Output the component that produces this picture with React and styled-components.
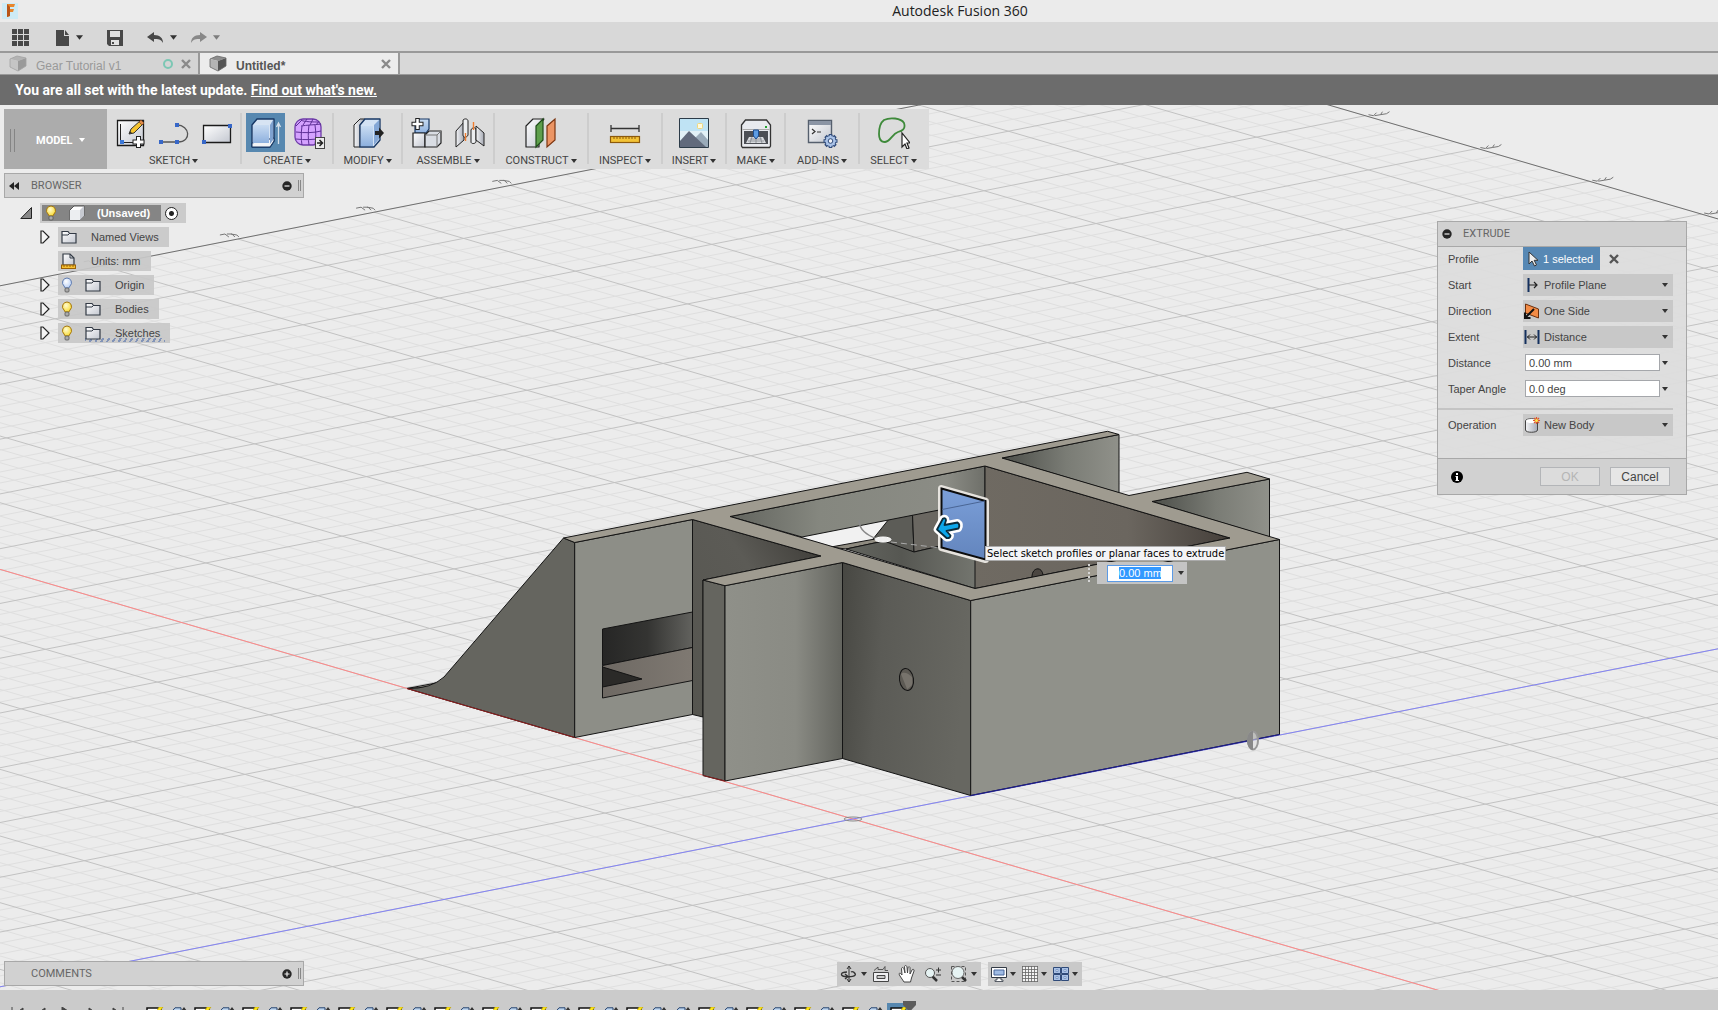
import React from 'react';
import styled, { createGlobalStyle, css } from 'styled-components';

const GlobalStyle = createGlobalStyle`
    * {
        box-sizing: border-box;
    }

    body {
        margin: 0;
        overflow: hidden;
        background: #ececec;
        color: #444;
        font-family: Roboto, 'Liberation Sans', sans-serif;
        font-size: 12px;
    }

    button, input, select {
        font: inherit;
        color: inherit;
    }

    button {
        padding: 0;
        border: 0;
        background: none;
    }

    svg {
        display: block;
        flex: none;
    }
`;

/* ---------- small shared glyphs ---------- */

const Caret = ({ color = '#333', size = 6 }) => (
    <svg width={size} height={size - 2} viewBox="0 0 6 4">
        <path d="M0 0h6L3 4z" fill={color} />
    </svg>
);

const Cross = ({ color = '#8a8a8a', size = 10 }) => (
    <svg width={size} height={size} viewBox="0 0 10 10">
        <path d="M1 1l8 8M9 1L1 9" stroke={color} strokeWidth="2.4" />
    </svg>
);

const RoundSign = ({ plus }) => (
    <svg width="10" height="10" viewBox="0 0 10 10">
        <circle cx="5" cy="5" r="4.7" fill="#262626" />
        <path d={plus ? 'M2.5 5h5M5 2.5v5' : 'M2.5 5h5'} stroke="#eee" strokeWidth="1.2" />
    </svg>
);

const DocCube = ({ faded }) => (
    <svg width="18" height="18" viewBox="0 0 18 18" opacity={faded ? 0.45 : 1}>
        <path d="M1 4L8 1l9 2-8 3z" fill="#8d8d8d" />
        <path d="M1 4l8 2v10l-8-4z" fill="#b4b4b4" />
        <path d="M9 6l8-3v8l-8 5z" fill="#555" />
        <path d="M1 4L8 1l9 2v8l-8 5-8-4z" fill="none" stroke="#666" strokeWidth=".8" />
    </svg>
);

/* ---------- ribbon icons ---------- */

const Gradients = () => (
    <svg width="0" height="0" style={{ position: 'absolute' }} aria-hidden="true">
        <defs>
            <linearGradient id="paper" x1="0" y1="0" x2="1" y2="1">
                <stop offset="0" stopColor="#fff" />
                <stop offset="1" stopColor="#c3c7d0" />
            </linearGradient>
            <linearGradient id="blue" x1="0" y1="0" x2="0" y2="1">
                <stop offset="0" stopColor="#c9dcf2" />
                <stop offset="1" stopColor="#8db0de" />
            </linearGradient>
            <linearGradient id="steel" x1="0" y1="0" x2="1" y2="0">
                <stop offset="0" stopColor="#f4f5f7" />
                <stop offset="1" stopColor="#a6aab4" />
            </linearGradient>
            <radialGradient id="bulbOn" cx=".4" cy=".35" r=".7">
                <stop offset="0" stopColor="#fffbd0" />
                <stop offset="1" stopColor="#f8d92c" />
            </radialGradient>
            <radialGradient id="bulbOff" cx=".4" cy=".35" r=".7">
                <stop offset="0" stopColor="#fff" />
                <stop offset="1" stopColor="#b5cdf5" />
            </radialGradient>
        </defs>
    </svg>
);

const Icon32 = ({ children }) => (
    <svg width="32" height="32" viewBox="0 0 32 32">{children}</svg>
);

const SketchIcon = () => (
    <Icon32>
        <path d="M2.5 3.5h26v25h-26z" fill="url(#paper)" stroke="#1b1b1b" strokeWidth="1.3" />
        <path d="M5.5 7v17.500M7 25.500h15" stroke="#222" fill="none" />
        <rect x="5" y="23" width="4" height="4" fill="#3b78d8" />
        <path d="M14 17l2-5 10-9 3 3-10 10z" fill="#f5c431" stroke="#333" />
        <path d="M24 5l2-2 3 3-2 2z" fill="#e08b4a" stroke="#7a3e18" strokeWidth=".7" />
        <path d="M14 17l1-3 2 2z" fill="#333" />
        <path d="M23.500 19v12M17.500 25h12" stroke="#222" strokeWidth="5" />
        <path d="M23.500 20v10M18.500 25h10" stroke="#fff" strokeWidth="3" />
    </Icon32>
);

const LineIcon = () => (
    <Icon32>
        <path d="M3 25h17c14 0 12-17-1-17" fill="none" stroke="#555" strokeWidth="1.300" />
        {[[1, 23], [17, 23], [17, 6]].map(([x, y]) => (
            <rect key={x + '-' + y} x={x} y={y} width="4" height="4" fill="#3767c8" />
        ))}
    </Icon32>
);

const RectIcon = () => (
    <Icon32>
        <path d="M2.500 8.500h27v17h-27z" fill="url(#paper)" stroke="#1b1b1b" strokeWidth="1.300" />
        <rect x="27" y="7" width="4" height="4" fill="#3767c8" />
        <rect x="1" y="23" width="4" height="4" fill="#3767c8" />
    </Icon32>
);

const ExtrudeIcon = () => (
    <Icon32>
        <path d="M2 8l5-6h17v22l-4 6H2z" fill="#d7e4f3" stroke="#173764" strokeWidth="1.400" strokeLinejoin="round" />
        <path d="M2 26v4h18l4-6v-3z" fill="#f3f4f6" stroke="#173764" />
        <path d="M3 8h16v18H3z" fill="url(#blue)" />
        <path d="M20 8l3-5v20l-3 4z" fill="#7fa2d0" />
        <path d="M28.500 27V7M26.500 10l2-4 2 4" stroke="#d6e0ea" fill="none" strokeWidth="1.300" />
    </Icon32>
);

const FormIcon = () => (
    <Icon32>
        <rect x="2" y="2" width="26" height="26" rx="8" fill="#d5a2ff" stroke="#6d3ba8" strokeWidth="1.300" />
        <path d="M8 3c2 2 14 2 18 2M8 9c6-1 12-1 20-2M3 15c8 1 18 1 25-1M3 22c8 1 18 1 25-1M9 9c-1 7-1 13 0 19M16 8c-1 7-1 14 0 20M22 8c1 7 1 13 0 19M3 9l6-6M10 8l4-6M17 8l3-6M23 8l3-4" stroke="#5d2f96" fill="none" />
        <rect x="22.500" y="20.500" width="9" height="11" fill="#ececec" stroke="#444" />
        <path d="M24 26h5M26.500 23l3 3-3 3" stroke="#222" strokeWidth="1.500" fill="none" />
    </Icon32>
);

const ModifyIcon = () => (
    <Icon32>
        <path d="M2 8l6-6h5L8 8v22H2z" fill="url(#steel)" stroke="#222" strokeLinejoin="round" />
        <path d="M8 8l5-6h15v21l-6 7H8z" fill="#d3e2f4" stroke="#173764" strokeWidth="1.300" strokeLinejoin="round" />
        <path d="M9 9h12v20H9z" fill="url(#blue)" />
        <path d="M22 8l5-5v19l-5 6z" fill="#84a7d6" />
        <path d="M23 14h4v-3.500l5 5.500-5 5.500V18h-4z" fill="#222" />
    </Icon32>
);

const ComponentIcon = () => (
    <Icon32>
        <path d="M4 6l4-4h10v10l-3 4H4z" fill="url(#blue)" stroke="#173764" strokeWidth="1.200" />
        <path d="M2 16h12v14H2z" fill="url(#paper)" stroke="#222" strokeWidth="1.200" />
        <path d="M14 18l4-4h12v12l-4 4H14z" fill="#d9dde3" stroke="#222" strokeWidth="1.200" />
        <path d="M14 18h12v12M26 18l4-4" stroke="#777" fill="none" />
        <path d="M6.500 1v12M.5 7h12" stroke="#222" strokeWidth="4.500" />
        <path d="M6.500 2v10M1.500 7h10" stroke="#fff" strokeWidth="2.500" />
    </Icon32>
);

const JointIcon = () => (
    <Icon32>
        <path d="M2 14l8-9v18l-8 7z" fill="url(#steel)" stroke="#222" />
        <path d="M9 3c2-2 5-1 5 1v14c-1 3-5 3-5 0z" fill="#eceef0" stroke="#222" />
        <path d="M17 13c1-3 5-3 5 0v12c-1 2-5 2-5 0z" fill="#eceef0" stroke="#222" />
        <path d="M22 9l8 7v13l-8-6z" fill="url(#steel)" stroke="#222" />
        <path d="M11.500 16v8M19.500 5v8" stroke="#ee7c30" strokeWidth="1.400" />
    </Icon32>
);

const PlaneIcon = () => (
    <Icon32>
        <path d="M1 9l7-7h11l-5 7v21H1z" fill="url(#paper)" stroke="#222" strokeWidth="1.200" strokeLinejoin="round" />
        <path d="M11 9l7-7v21l-7 7z" fill="#5e9f4c" stroke="#1e4d18" strokeWidth="1.200" />
        <path d="M22 9l8-7v21l-8 7z" fill="#ec9564" stroke="#7c3510" strokeWidth="1.200" />
    </Icon32>
);

const MeasureIcon = () => (
    <Icon32>
        <path d="M2 11.500h28M2 8v7M30 8v7" stroke="#333" strokeWidth="1.300" />
        <rect x="1.500" y="19.500" width="29" height="6" fill="#f3c336" stroke="#8d5a0c" strokeWidth="1.200" />
        <path d="M5 20v2M8 20v2M11 20v2M14 20v2M17 20v2M20 20v2M23 20v2M26 20v2" stroke="#8d5a0c" />
    </Icon32>
);

const ImageIcon = () => (
    <Icon32>
        <path d="M1.500 1.500h29v29h-29z" fill="#bfe3f4" stroke="#2c3b48" />
        <path d="M2 14h28v16H2z" fill="#e2f1f7" />
        <rect x="19.500" y="6.500" width="5" height="5" rx="1" fill="#fffbe0" stroke="#f1d77c" />
        <path d="M14 24l9-9 7 8v7H16z" fill="#9aabba" />
        <path d="M2 24l9-10 17 16H2z" fill="#616a7c" />
    </Icon32>
);

const PrinterIcon = () => (
    <Icon32>
        <path d="M1.500 8l4-5h21l4 5v21l-1 1.500h-27l-1-1.500z" fill="#e8eaee" stroke="#333" strokeWidth="1.300" />
        <path d="M2.500 12.500h27" stroke="#aaa" />
        <path d="M4 14h24v13H4z" fill="#4c4f55" />
        <path d="M6 26l3-6h14l3 6z" fill="#d7dade" />
        <path d="M8 24h16M10 22h12M12 20l-2 6M20 20l2 6M16 20v6" stroke="#84888e" strokeWidth=".8" />
        <path d="M13.500 13h5v6l-2.500 3-2.500-3z" fill="#5d9de4" stroke="#1d4f92" />
        <rect x="25" y="9" width="2" height="2" fill="#22a32e" />
    </Icon32>
);

const ScriptIcon = () => (
    <Icon32>
        <path d="M2.500 3.500h23v22h-23z" fill="url(#paper)" stroke="#555f6d" strokeWidth="1.400" />
        <path d="M3 4h22v4H3z" fill="#8b95a5" />
        <path d="M6 12l3 2.500L6 17M11 15h4" fill="none" stroke="#333" strokeWidth="1.200" />
        <g stroke="#2f4a79" strokeWidth="3.500">
            <path d="M24.500 17v14M17.500 24h14M19.500 19l10 10M29.500 19l-10 10" />
        </g>
        <circle cx="24.500" cy="24" r="5.500" fill="#aac3e8" stroke="#2f4a79" />
        <path d="M24.500 18v12M18.500 24h12M20.500 20l8 8M28.500 20l-8 8" stroke="#aac3e8" strokeWidth="1.600" />
        <circle cx="24.500" cy="24" r="2.300" fill="#f0f3f8" stroke="#2f4a79" />
    </Icon32>
);

const SelectIcon = () => (
    <Icon32>
        <path d="M6 3c6-3 17-2 20 3 2 6-2 8-6 9-6 2-7 9-13 10-5 0-6-4-6-8 0-5 1-11 5-14z" fill="none" stroke="#3e8a3a" strokeWidth="1.800" />
        <path d="M24 16v14l3-3 2 5 2-1-2-5h3z" fill="#fff" stroke="#222" strokeWidth="1.200" />
    </Icon32>
);

/* ---------- browser tree icons ---------- */

const Bulb = ({ off }) => (
    <svg width="12" height="16" viewBox="0 0 12 16">
        <path d="M6 1a4.600 4.600 0 00-3 8l1.200 2h3.600L9 9a4.600 4.600 0 00-3-8z" fill={off ? 'url(#bulbOff)' : 'url(#bulbOn)'} stroke={off ? '#5f7cb0' : '#a5760c'} />
        <rect x="4" y="11" width="4" height="4" rx="1" fill="#aaa" stroke="#555" strokeWidth=".8" />
    </svg>
);

const Folder = () => (
    <svg width="16" height="14" viewBox="0 0 16 14">
        <path d="M1 1.500h6l1.500 2H15v9.500H1z" fill="url(#paper)" stroke="#333a45" strokeWidth="1.200" />
        <path d="M1 5h6l1.500-1.500" fill="none" stroke="#333a45" />
    </svg>
);

const UnitsDoc = () => (
    <svg width="16" height="16" viewBox="0 0 16 16">
        <path d="M2 12V1h7l4 4v7z" fill="url(#paper)" stroke="#333a45" strokeWidth="1.200" />
        <path d="M9 1v4h4" fill="none" stroke="#333a45" />
        <rect x=".5" y="12" width="14" height="3.500" fill="#f7c233" stroke="#9b6206" />
        <path d="M3 12v2M6 12v2M9 12v2M12 12v2" stroke="#9b6206" />
    </svg>
);

const BodyCube = () => (
    <svg width="16" height="16" viewBox="0 0 16 16">
        <path d="M1 5l4-4h10v10l-4 4H1z" fill="#fff" stroke="#555" strokeLinejoin="round" />
        <path d="M11 5l4-4v10l-4 4z" fill="#c7cad1" />
        <path d="M1 5h10v10H1z" fill="#eceef1" />
    </svg>
);

const Twisty = ({ open }) => (
    <svg width="12" height="14" viewBox="0 0 12 14">
        {open
            ? <path d="M11.500 1.500v11H.8z" fill="#888" stroke="#222" />
            : <path d="M1 1h2l6 6-6 6H1z" fill="#f4f4f4" stroke="#222" strokeWidth="1.200" />}
    </svg>
);

/* ---------- window chrome ---------- */

const TitleBar = styled.header`
    display: flex;
    align-items: center;
    height: 22px;
    padding-left: 2px;
    background: #ebebeb;

    h1 {
        flex: 1;
        margin: 0;
        padding-left: 184px;
        text-align: center;
        font: 14px/22px 'Open Sans', sans-serif;
        color: #222;
    }
`;

const QuickBar = styled.nav`
    display: flex;
    align-items: center;
    gap: 24px;
    height: 31px;
    padding: 2px 12px 0;
    background: #d8d8d8;
    border-bottom: 2px solid #999;
`;

const UndoRedo = styled.div`
    display: flex;
    gap: 13px;
`;

const QuickButton = styled.button`
    display: flex;
    align-items: center;
    gap: 6px;
    height: 20px;
    opacity: ${(p) => (p.disabled ? 0.55 : 1)};
`;

const TabBar = styled.div`
    display: flex;
    height: 22px;
    background: #d8d8d8;
    border-bottom: 1px solid #999;
`;

const Tab = styled.div`
    display: flex;
    align-items: center;
    width: 200px;
    padding: 0 7px 0 9px;
    border-right: 2px solid #999;
    background: ${(p) => (p.$active ? '#ececec' : '#d4d4d4')};

    button:first-child {
        display: flex;
        align-items: center;
        flex: 1;
        gap: 9px;
        font: ${(p) => (p.$active ? 'bold' : 'normal')} 12px/18px 'Liberation Sans', sans-serif;
        color: ${(p) => (p.$active ? '#555' : '#999')};
    }

    button:first-child span {
        padding-top: 4px;
    }
`;

const SyncDot = styled.span`
    width: 10px;
    height: 10px;
    margin-right: 8px;
    border: 2px solid #7cc7b4;
    border-radius: 50%;
`;

const Banner = styled.p`
    height: 30px;
    margin: 0;
    padding-left: 15px;
    background: #6c6c6c;
    color: #fff;
    font: bold 14px/31px Roboto, 'Liberation Sans', sans-serif;

    a {
        color: #fff;
    }
`;

/* ---------- canvas ---------- */

const Page = styled.div`
    display: flex;
    flex-direction: column;
    height: 100vh;
`;

const Viewport = styled.main`
    position: relative;
    display: flex;
    flex-direction: column;
    align-items: flex-start;
    flex: 1;
    min-height: 0;
    padding: 4px;
    overflow: hidden;
`;

const Scene = styled.svg`
    position: absolute;
    inset: 0;
    width: 100%;
    height: 100%;
`;

const Ribbon = styled.div`
    position: relative;
    display: flex;
    height: 60px;
    margin-bottom: 4px;
    background: #dcdcdc;
`;

const ModelButton = styled.button`
    display: flex;
    align-items: center;
    gap: 6px;
    width: 103px;
    padding: 2px 0 0 6px;
    background: #acacac;
    color: #fff;
    font-size: 11px;
    font-weight: bold;

    span {
        width: 5px;
        height: 23px;
        margin-right: 15px;
        border: solid #858585;
        border-width: 0 1px;
    }
`;

const RibbonGroup = styled.section`
    display: flex;
    flex-direction: column;
    align-items: center;
    width: ${(p) => p.$width}px;
    padding: 4px 2px 0 0;
    background: ${(p) => (p.$last ? 'none' : 'linear-gradient(#cdcdcd, #cdcdcd) no-repeat right 4px / 2px 51px')};
`;

const ToolRow = styled.div`
    display: flex;
    gap: 4px;
`;

const ToolButton = styled.button`
    display: grid;
    place-items: center;
    width: 39px;
    height: 39px;
    background: ${(p) => (p.$active ? '#5788b0' : 'none')};
`;

const GroupLabel = styled.button`
    display: flex;
    align-items: center;
    gap: 2px;
    height: 18px;
    font-size: 11px;
    line-height: 18px;
`;

const panelHeader = css`
    display: flex;
    align-items: center;
    height: 25px;
    background: #d1d1d1;
    border: 1px solid #a8a8a8;

    h2 {
        margin: 0;
        font-size: 11px;
        font-weight: normal;
        color: #666;
    }
`;

const SidePanelBar = styled.div`
    ${panelHeader}
    position: relative;
    width: 300px;
    padding: 0 2px 0 4px;

    h2 {
        flex: 1;
        padding-left: ${(p) => (p.$plain ? 22 : 12)}px;
    }
`;

const Grip = styled.span`
    width: 3px;
    height: 11px;
    margin-left: 6px;
    border: solid #888;
    border-width: 0 1px;
`;

const Tree = styled.ul`
    position: relative;
    display: flex;
    flex-direction: column;
    gap: 4px;
    margin: 5px 0 0;
    padding: 0 0 0 16px;
    list-style: none;
`;

const TreeItem = styled.li`
    display: flex;
    align-items: center;
    height: 20px;
    padding-left: ${(p) => (p.$root ? 0 : 20)}px;

    > button {
        width: ${(p) => (p.$root ? 20 : 18)}px;
    }
`;

const NodeBox = styled.div`
    display: flex;
    align-items: center;
    gap: 12px;
    height: 20px;
    padding: 0 10px 0 ${(p) => (p.$root ? 2 : 3)}px;
    background: rgba(200, 200, 200, 0.92);
    font: 11px/20px 'Liberation Sans', sans-serif;

    input {
        width: 13px;
        height: 13px;
        margin: 0 -2px 0 -8px;
        appearance: none;
        border: 1px solid #222;
        border-radius: 50%;
        background: radial-gradient(#222 2px, #fff 3px);
    }
`;

const RootName = styled.span`
    display: flex;
    align-items: center;
    gap: 12px;
    height: 16px;
    padding: 0 11px 0 3px;
    background: #858585;
    color: #fff;
    font-weight: bold;
`;

const NodeName = styled.span`
    display: flex;
    align-items: center;
    gap: 14px;
    height: 20px;
    margin-right: -5px;
    padding-right: 5px;
    background: ${(p) => (p.$hatched
        ? 'repeating-linear-gradient(120deg, #8294b8 0 2px, transparent 2px 5px) no-repeat 0 15px / 100% 4px'
        : 'none')};
`;

/* ---------- extrude dialog ---------- */

const Dialog = styled.form`
    position: absolute;
    top: 116px;
    right: 31px;
    width: 250px;
    background: rgba(221, 221, 221, 0.96);
    border: 1px solid #a8a8a8;
    font: 11px/14px 'Liberation Sans', sans-serif;
`;

const DialogHeader = styled.div`
    ${panelHeader}
    gap: 11px;
    padding-left: 4px;
    border-width: 0 0 1px;
    font-family: Roboto, sans-serif;
`;

const Fields = styled.div`
    display: flex;
    flex-direction: column;
    gap: 3px;
    height: 211px;
    padding-right: 13px;

    hr {
        width: 100%;
        height: 2px;
        margin: 5px 0 0;
        border: 0;
        background: #c4c4c4;
    }
`;

const FieldRow = styled.div`
    display: flex;
    align-items: center;
    height: 23px;
    padding-left: 10px;

    > label {
        flex: none;
        width: 75px;
    }
`;

const Picker = styled.div`
    display: flex;
    align-items: center;
    flex: 1;
    height: 22px;
    gap: 4px;
    padding: 0 5px 0 1px;
    background: #c8c8c8;

    select {
        flex: 1;
        padding: 0;
        appearance: none;
        border: 0;
        background: none;
    }
`;

const ValueBox = styled.div`
    display: flex;
    align-items: center;
    flex: 1;
    gap: 2px;
    min-width: 0;
    padding: 0 5px 0 2px;

    input {
        flex: 1;
        min-width: 0;
        height: 17px;
        padding: 0 3px;
        border: 1px solid #a5a7ab;
        background: #fff;
    }
`;

const SelectedButton = styled.button`
    display: flex;
    align-items: center;
    gap: 4px;
    height: 23px;
    margin-right: 9px;
    padding: 0 7px 0 5px;
    background: #5788b4;
    color: #fff;
`;

const DialogFooter = styled.div`
    display: flex;
    align-items: center;
    gap: 10px;
    height: 36px;
    padding: 0 16px 0 13px;
    background: #d1d1d1;
    border-top: 1px solid #a8a8a8;

    svg {
        margin-right: auto;
    }

    button {
        width: 60px;
        height: 19px;
        border: 1px solid #b3b5b8;
        background: #e6e6e6;
        font-size: 12px;
    }

    button:disabled {
        background: #dcdcdc;
        color: #b5b5b5;
    }
`;

/* ---------- overlays pinned to the model ---------- */

const Hint = styled.div`
    position: absolute;
    top: 441px;
    left: calc(50% + 126px);
    height: 15px;
    padding: 0 1px;
    border: 1px solid #aaa;
    background: #f4f4f6;
    color: #000;
    font: 11px/13px 'DejaVu Sans Condensed', 'DejaVu Sans', sans-serif;
    white-space: nowrap;
`;

const QuickValue = styled.label`
    position: absolute;
    top: 457px;
    left: calc(50% + 238px);
    display: flex;
    align-items: center;
    gap: 5px;
    height: 22px;
    padding: 0 3px 0 10px;
    background: #c4c4c4;

    input {
        width: 66px;
        height: 17px;
        padding: 0 11px;
        border: 1px solid #5b9ae6;
        outline: none;
        background: #fff;
        font: 11px/15px 'Liberation Sans', sans-serif;
        text-align: right;
    }

    input::selection {
        background: #3399ff;
        color: #fff;
    }
`;

const BottomRow = styled.div`
    position: relative;
    display: grid;
    grid-template-columns: calc(50% - 22px) auto;
    align-items: center;
    align-self: stretch;
    margin-top: auto;
`;

const NavBars = styled.div`
    display: flex;
    gap: 7px;
`;

const NavBar = styled.div`
    display: flex;
    align-items: center;
    gap: ${(p) => p.$gap}px;
    height: 24px;
    padding: 0 7px 0 3px;
    background: #c9c9c9;
`;

const NavButton = styled.button`
    display: flex;
    align-items: center;
    gap: 3px;

    svg + svg {
        margin-right: -3px;
    }
`;

const Timeline = styled.footer`
    display: flex;
    align-items: flex-start;
    flex: none;
    height: 20px;
    padding: 13px 0 0 11px;
    background: #cbcbcb;
    overflow: hidden;
`;

const Playback = styled.div`
    display: flex;
    gap: 11px;
    width: 132px;
    padding-top: 4px;
`;

const Feature = styled.button`
    width: 24px;
    height: 20px;
    padding: 4px 3px 0;
    background: ${(p) => (p.$current ? 'linear-gradient(#5788b0, #5788b0) no-repeat 0 0 / 20px 20px' : 'none')};
`;

const Marker = styled.svg`
    margin: -2px 0 0 -8px;
`;

/* ---------- scene drawing ---------- */

// ground plane in screen space: one major cell along each axis
const ORIGIN = [853, 819];
const U = [136.2, -26.8];
const V = [111.9, 32.75];
const EDGE = 12.8;

const project = (a, b) => [
    (ORIGIN[0] + a * U[0] + b * V[0]).toFixed(1),
    (ORIGIN[1] + a * U[1] + b * V[1]).toFixed(1),
].join(' ');

const segment = (a1, b1, a2, b2) => `M${project(a1, b1)}L${project(a2, b2)}`;

const gridLines = (major) => {
    let d = '';
    for (let i = -64; i <= 64; i++) {
        if ((i % 5 === 0) !== major) continue;
        const k = i / 5;
        d += segment(-EDGE, k, EDGE, k) + segment(k, -EDGE, k, EDGE);
    }
    return d;
};

const leftTicks = [5, 6, 7, 8].map((a) => [a, -EDGE]);
const rightTicks = [-11, -10, -9, -8].map((b) => [EDGE, b]);

const Canvas = () => (
    <Scene viewBox="0 105 1718 885" preserveAspectRatio="xMidYMin slice">
        <defs>
            <linearGradient id="wallShade" x1="0" y1="0" x2="1" y2="0">
                <stop offset="0" stopColor="#8f9089" />
                <stop offset=".6" stopColor="#8a8b84" />
                <stop offset="1" stopColor="#63645e" />
            </linearGradient>
            <linearGradient id="boxShade" x1="0" y1="0" x2="1" y2=".15">
                <stop offset="0" stopColor="#474742" />
                <stop offset=".35" stopColor="#5b5b56" />
                <stop offset="1" stopColor="#676761" />
            </linearGradient>
            <linearGradient id="webShade" x1="0" y1="1" x2="1" y2="0">
                <stop offset="0" stopColor="#55554f" />
                <stop offset=".6" stopColor="#5c5b56" />
                <stop offset="1" stopColor="#393733" />
            </linearGradient>
            <linearGradient id="finShade" x1="0" y1="0" x2="1" y2="0">
                <stop offset="0" stopColor="#4c4e49" />
                <stop offset=".55" stopColor="#7a7c75" />
                <stop offset="1" stopColor="#90918a" />
            </linearGradient>
            <linearGradient id="innerBack" x1="0" y1="0" x2="1" y2="0">
                <stop offset="0" stopColor="#62645e" />
                <stop offset=".35" stopColor="#85877f" />
                <stop offset=".85" stopColor="#8b8c85" />
                <stop offset="1" stopColor="#6e6f69" />
            </linearGradient>
            <linearGradient id="innerSide" x1="0" y1="0" x2="1" y2="0">
                <stop offset="0" stopColor="#6f6a62" />
                <stop offset=".6" stopColor="#6b665f" />
                <stop offset="1" stopColor="#453f3a" />
            </linearGradient>
            <linearGradient id="floorShade" x1="0" y1="0" x2="1" y2="0">
                <stop offset="0" stopColor="#63655f" />
                <stop offset=".4" stopColor="#565752" />
                <stop offset="1" stopColor="#777972" />
            </linearGradient>
            <linearGradient id="slotShade" x1="0" y1="0" x2="1" y2="0">
                <stop offset="0" stopColor="#262625" />
                <stop offset=".5" stopColor="#343432" />
                <stop offset="1" stopColor="#62625e" />
            </linearGradient>
            <linearGradient id="slotFloor" x1="0" y1="0" x2="1" y2="0">
                <stop offset="0" stopColor="#6e6963" />
                <stop offset="1" stopColor="#7f7972" />
            </linearGradient>
            <linearGradient id="faceBlue" x1="0" y1="0" x2="0" y2="1">
                <stop offset="0" stopColor="#7b9fd9" />
                <stop offset="1" stopColor="#6385bd" />
            </linearGradient>
        </defs>

        <rect y="105" width="1718" height="885" fill="#ececec" />
        <path d={gridLines(false)} stroke="#dfdfdf" fill="none" />
        <path d={gridLines(true)} stroke="#c2c2c2" fill="none" />
        <path d={segment(-EDGE, -EDGE, EDGE, -EDGE) + segment(EDGE, -EDGE, EDGE, EDGE)} stroke="#6f6f6f" fill="none" />
        <path d={segment(0, -EDGE, 0, EDGE)} stroke="#f88" fill="none" />
        <path d={segment(-EDGE, 0, EDGE, 0)} stroke="#8484f6" fill="none" />

        {/* ruler marks along the plane's border */}
        <g stroke="#777" fill="none">
            {leftTicks.map(([a, b]) => (
                <path key={a} d={`M${project(a, b)}m-18 -4l5 -1 4 3m-2 -3l5 0 3 3m-4 -3l6 1 2 2`} />
            ))}
            {rightTicks.map(([a, b]) => (
                <path key={b} d={`M${project(a, b)}m3 -1l5 1 3 -3m-2 3l6 -1 2 -3m-2 3l6 -1 3 -2`} />
            ))}
        </g>

        <g stroke="#141414" strokeLinejoin="round">
            {/* fins behind the box */}
            <path d="M1002 458L1119 434.500V493z" fill="url(#finShade)" />
            <path d="M1152 501.500L1269.500 479V537z" fill="url(#finShade)" />

            {/* inside of the pocket */}
            <path d="M802 537L889 519L873 539L835 547z" fill="#f1f1f1" stroke="none" />
            <path d="M831 547L875 539L884 541L846 549z" fill="#8f8b80" />
            <path d="M889 519L912.500 514.500L914 552L873 539z" fill="#5c5c57" />
            <path d="M912.500 514.500L985 500V546H940L914 552z" fill="#6a6761" />
            <path d="M846 549L884 541L914 552L940 546L985 560L975 588.500z" fill="url(#floorShade)" />
            <path d="M730 516.500L985 466V501L802 537z" fill="url(#innerBack)" />
            <path d="M985 466L1230 538L975 588.500V556L985 558z" fill="url(#innerSide)" />
            <path d="M1032 577c0-10 10-11 11-2" fill="#4b4641" />

            {/* left wedge and wall */}
            <path d="M407 688.500L436 683L432 687z" fill="#a19d93" />
            <path d="M563.500 538L574.700 542.500V737.500L407 688.500Q431 689 444 677z" fill="#65655f" />
            <path d="M574.700 542.500L692.500 519.500V714.500L574.700 737.500z" fill="#8d8e87" />
            <path d="M602.500 629L692.500 612V647.500L602.500 665.500z" fill="url(#slotShade)" />
            <path d="M602.500 665.500L692.500 647.500V680.500L602.500 698z" fill="url(#slotFloor)" />
            <path d="M602.500 667L642 679L602.500 687z" fill="#2b2a28" />

            {/* web between wall and plank */}
            <path d="M692.500 519.500L821 556L703 580V717L692.500 714.500z" fill="url(#webShade)" />

            {/* plank */}
            <path d="M703 580L725 585.700V781L703 775.500z" fill="#65655f" />
            <path d="M725 585.700L842.500 562.500V758.500L725 781z" fill="url(#wallShade)" />

            {/* box */}
            <path d="M842.500 562.500L970.700 600.500V795.500L842.500 758.500z" fill="url(#boxShade)" />
            <path d="M970.700 600.500L1279.500 539.500V734.500L970.700 795.500z" fill="#90918a" />
            <ellipse cx="906.500" cy="679.500" rx="7" ry="11" fill="#5d5a54" transform="rotate(-8 906.500 679.500)" />
            <path d="M901 674c3-3 8 0 11 3v8c-2 2-4 4-5 4" fill="#77736c" stroke="none" />

            {/* rim */}
            <path
                fillRule="evenodd"
                fill="#9f9b90"
                d="M563.500 538L1107.500 431.300L1119 434.500L1002 458L1129 495.500L1247 472.300L1269.700 479L1152 501.500L1279.500 539.500L970.700 600.500L842.500 562.500L725 585.700L703 580L821 556L692.500 519.500L574.700 542.500z
                   M730 516.500L985 466L1230 538L975 588.500z"
            />
        </g>

        <path d="M407 688.500L574.700 737.500M703 775.500L725 781" stroke="#8c1f1f" />
        <path d="M970.700 795.500L1279.500 734.500" stroke="#1c1c96" />

        {/* dimension handles */}
        <path d="M859 520c0 10 8 15 18 19" stroke="#888" fill="none" strokeWidth="1.500" />
        <path d="M891 542l50 6" stroke="#aaa" fill="none" strokeDasharray="6 4" />
        <ellipse cx="883" cy="539.500" rx="8" ry="2.500" fill="#eee" stroke="#fff" />
        <ellipse cx="853" cy="819" rx="9" ry="2" fill="none" stroke="#888" />
        <ellipse cx="1253" cy="740.500" rx="5" ry="9" fill="#ddd" fillOpacity=".6" stroke="#999" strokeWidth="2" />
        <path d="M1253 731v19c-8-1-8-18 0-19z" fill="#888" />

        {/* selected profile with the drag arrow */}
        <path d="M941.500 488.500L985.500 501V559.500L941.500 547.500z" fill="url(#faceBlue)" stroke="#e6e3de" strokeWidth="7" strokeLinejoin="round" />
        <path d="M941.500 488.500L985.500 501V559.500L941.500 547.500z" fill="url(#faceBlue)" stroke="#0c0c0c" strokeWidth="2" />
        <path d="M942 509.500L985 501" stroke="#4a6594" />
        <path
            d="M937 529.500L943 518.500q3-1 3 2l-1.500 4.500 13-2.500q3 2 1 6l-12 2.500 4 4.500q0 3-4 2.500z"
            fill="#0da7ea"
            stroke="#fff"
            strokeWidth="7"
            strokeLinejoin="round"
        />
        <path
            d="M937 529.500L943 518.500q3-1 3 2l-1.500 4.500 13-2.500q3 2 1 6l-12 2.500 4 4.500q0 3-4 2.500z"
            fill="#0da7ea"
            stroke="#0a2c3c"
            strokeWidth="1.800"
            strokeLinejoin="round"
        />
        <path d="M1089 564v20" stroke="#d5d5d5" strokeWidth="2" strokeDasharray="2 2" />
    </Scene>
);

/* ---------- data ---------- */

const groups = [
    { label: 'SKETCH', width: 135, tools: [['Create Sketch', SketchIcon], ['Line', LineIcon], ['Rectangle', RectIcon]] },
    { label: 'CREATE', width: 92, tools: [['Extrude', ExtrudeIcon], ['Create Form', FormIcon]] },
    { label: 'MODIFY', width: 69, tools: [['Press Pull', ModifyIcon]] },
    { label: 'ASSEMBLE', width: 92, tools: [['New Component', ComponentIcon], ['Joint', JointIcon]] },
    { label: 'CONSTRUCT', width: 94, tools: [['Offset Plane', PlaneIcon]] },
    { label: 'INSPECT', width: 74, tools: [['Measure', MeasureIcon]] },
    { label: 'INSERT', width: 64, tools: [['Attached Canvas', ImageIcon]] },
    { label: 'MAKE', width: 59, tools: [['3D Print', PrinterIcon]] },
    { label: 'ADD-INS', width: 74, tools: [['Scripts and Add-Ins', ScriptIcon]] },
    { label: 'SELECT', width: 69, tools: [['Select', SelectIcon]] },
];

const nodes = [
    { name: 'Named Views', icon: Folder },
    { name: 'Units: mm', icon: UnitsDoc, leaf: true },
    { name: 'Origin', icon: Folder, bulb: 'off' },
    { name: 'Bodies', icon: Folder, bulb: 'on' },
    { name: 'Sketches', icon: Folder, bulb: 'on', hatched: true },
];

const features = Array.from({ length: 32 }, (_, i) => (
    (i < 22 ? i % 2 === 0 : i % 2 === 1) ? 'sketch' : 'extrude'
));

/* ---------- parts ---------- */

const startIcon = (
    <svg width="16" height="16" viewBox="0 0 16 16">
        <path d="M4.500 1v14" stroke="#14305e" strokeWidth="2" />
        <path d="M5 8h8M10 5l3 3-3 3" stroke="#222" fill="none" strokeWidth="1.200" />
    </svg>
);

const directionIcon = (
    <svg width="16" height="16" viewBox="0 0 16 16">
        <path d="M1.500 1l13 5v9l-13-5z" fill="#f38b45" stroke="#6d2f0b" />
        <path d="M10 6L2 14M1 9.500V15h5.500" stroke="#111" strokeWidth="2" fill="none" />
    </svg>
);

const extentIcon = (
    <svg width="16" height="16" viewBox="0 0 16 16">
        <path d="M1.500 1v14M14.500 1v14" stroke="#14305e" strokeWidth="2" />
        <path d="M3 8h10M6 5.500L3.500 8 6 10.500M10 5.500l2.500 2.500-2.500 2.500" stroke="#222" fill="none" />
    </svg>
);

const bodyIcon = (
    <svg width="16" height="16" viewBox="0 0 16 16">
        <path d="M1.500 4c0-3 12-3 12 0v9c0 3-12 3-12 0z" fill="url(#steel)" stroke="#444" />
        <ellipse cx="7.500" cy="4" rx="5.500" ry="2" fill="#fff" />
        <path d="M12.500 0v7M9 3.500h7M10 1l5 5M15 1l-5 5" stroke="#e0562a" strokeWidth="1.200" />
        <circle cx="12.500" cy="3.500" r="1.500" fill="#ffe84a" />
    </svg>
);

function PickField({ id, label, value, icon }) {
    return (
        <FieldRow>
            <label htmlFor={id}>{label}</label>
            <Picker>
                {icon}
                <select id={id} defaultValue={value}>
                    <option>{value}</option>
                </select>
                <Caret />
            </Picker>
        </FieldRow>
    );
}

function ValueField({ id, label, value }) {
    return (
        <FieldRow>
            <label htmlFor={id}>{label}</label>
            <ValueBox>
                <input id={id} defaultValue={value} />
                <Caret />
            </ValueBox>
        </FieldRow>
    );
}

function ExtrudeDialog() {
    return (
        <Dialog onSubmit={(e) => e.preventDefault()}>
            <DialogHeader>
                <RoundSign />
                <h2>EXTRUDE</h2>
            </DialogHeader>
            <Fields>
                <FieldRow>
                    <label htmlFor="profile">Profile</label>
                    <SelectedButton id="profile" type="button">
                        <svg width="11" height="16" viewBox="0 0 11 16">
                            <path d="M1 1v12l3-3 2.500 5 2-1-2.300-4.700H10z" fill="#eee" stroke="#333" />
                        </svg>
                        1 selected
                    </SelectedButton>
                    <button type="button" aria-label="Clear selection"><Cross color="#555" /></button>
                </FieldRow>
                <PickField id="start" label="Start" value="Profile Plane" icon={startIcon} />
                <PickField id="direction" label="Direction" value="One Side" icon={directionIcon} />
                <PickField id="extent" label="Extent" value="Distance" icon={extentIcon} />
                <ValueField id="distance" label="Distance" value="0.00 mm" />
                <ValueField id="taper" label="Taper Angle" value="0.0 deg" />
                <hr />
                <PickField id="operation" label="Operation" value="New Body" icon={bodyIcon} />
            </Fields>
            <DialogFooter>
                <svg width="12" height="12" viewBox="0 0 12 12">
                    <circle cx="6" cy="6" r="6" fill="#000" />
                    <path d="M5 2h2v2H5zM4.500 5H7v4h1v1H4.500V9H5V6h-.5z" fill="#fff" />
                </svg>
                <button type="submit" disabled>OK</button>
                <button type="button">Cancel</button>
            </DialogFooter>
        </Dialog>
    );
}

function BrowserTree() {
    return (
        <Tree>
            <TreeItem $root>
                <button aria-label="Collapse (Unsaved)"><Twisty open /></button>
                <NodeBox $root>
                    <RootName>
                        <Bulb />
                        <BodyCube />
                        (Unsaved)
                    </RootName>
                    <input type="radio" name="active-component" aria-label="Activate (Unsaved)" defaultChecked />
                </NodeBox>
            </TreeItem>
            {nodes.map(({ name, icon: NodeIcon, leaf, bulb, hatched }) => (
                <TreeItem key={name}>
                    <button aria-label={'Expand ' + name} disabled={leaf}>{!leaf && <Twisty />}</button>
                    <NodeBox>
                        {bulb && <Bulb off={bulb === 'off'} />}
                        <NodeName $hatched={hatched}>
                            <NodeIcon />
                            {name}
                        </NodeName>
                    </NodeBox>
                </TreeItem>
            ))}
        </Tree>
    );
}

function Navigation() {
    return (
        <NavBars>
            <NavBar $gap={8}>
                <NavButton aria-label="Orbit">
                    <svg width="18" height="16" viewBox="0 0 18 16">
                        <path d="M9 0v16M7 3l2-3 2 3M7 13l2 3 2-3" stroke="#333" fill="none" />
                        <path d="M7 6C0 6 0 10 5 10.500s12 0 10-3-4-1.500-4-1.500M5 8l3 2.500L5 13" stroke="#333" fill="none" strokeWidth="1.400" />
                    </svg>
                    <Caret />
                </NavButton>
                <NavButton aria-label="Look at">
                    <svg width="18" height="16" viewBox="0 0 18 16">
                        <path d="M1.500 6.500h15v9h-15z" fill="#f0f0f2" stroke="#444" />
                        <path d="M5 9.500h8v3H5z" fill="#ccc" stroke="#444" />
                        <path d="M2 4.500l4-3.500v2.500h5l2-3v4h3" stroke="#555" fill="none" />
                    </svg>
                </NavButton>
                <NavButton aria-label="Pan">
                    <svg width="18" height="18" viewBox="0 0 18 18">
                        <path d="M6 17L2 11C0 8 2 7 4 10L3.500 4c0-2 2-2 2.500 0l1 4-.5-6c0-2 2-2 2.500 0L9.500 8l.5-5c.5-2 2-1.500 2 0l0 6 2-4c1-1.500 2.500-.5 2 1l-2.500 7-1 4z" fill="#fff" stroke="#444" />
                    </svg>
                </NavButton>
                <NavButton aria-label="Zoom">
                    <svg width="18" height="16" viewBox="0 0 18 16">
                        <path d="M8 10l5 5" stroke="#333" strokeWidth="2.500" />
                        <circle cx="6" cy="7" r="4.500" fill="#e6f3f3" stroke="#555" />
                        <path d="M12 4h5M14.500 1.500v5M12 9h5" stroke="#333" />
                    </svg>
                </NavButton>
                <NavButton aria-label="Fit">
                    <svg width="18" height="18" viewBox="0 0 18 18">
                        <path d="M1.500 1.500h14v15h-14z" fill="none" stroke="#555" strokeDasharray="3 2" />
                        <path d="M11 11l5 5" stroke="#333" strokeWidth="2.500" />
                        <circle cx="8" cy="7.500" r="6" fill="#e6f3f3" stroke="#666" />
                    </svg>
                    <Caret />
                </NavButton>
            </NavBar>
            <NavBar $gap={9}>
                <NavButton aria-label="Display settings">
                    <svg width="16" height="16" viewBox="0 0 16 16">
                        <path d="M.5 1.500h15v10H.5z" fill="#fff" stroke="#333a45" />
                        <path d="M3 4h10v5H3z" fill="#9fbbe4" stroke="#48679a" />
                        <path d="M6 12h4v2h2v1.500H4V14h2z" fill="#fff" stroke="#333a45" strokeWidth=".8" />
                    </svg>
                    <Caret />
                </NavButton>
                <NavButton aria-label="Grid and snaps">
                    <svg width="16" height="16" viewBox="0 0 16 16">
                        <path d="M.5.5h15v15H.5z" fill="#f4f4f4" />
                        <path d="M.5 0v16M3.500 0v16M6.500 0v16M9.500 0v16M12.500 0v16M15.500 0v16M0 .5h16M0 3.500h16M0 6.500h16M0 9.500h16M0 12.500h16M0 15.500h16" stroke="#666" strokeWidth=".8" />
                    </svg>
                    <Caret />
                </NavButton>
                <NavButton aria-label="Viewports">
                    <svg width="16" height="14" viewBox="0 0 16 14">
                        <path d="M.5.500h7v6h-7zM8.500.500h7v6h-7zM.5 7.500h7v6h-7zM8.500 7.500h7v6h-7z" fill="#a9c1e6" stroke="#2f4a79" />
                        <path d="M3 2.500h2v2H3zM11 2.500h2v2h-2zM3 9.500h2v2H3zM11 9.500h2v2h-2z" fill="#dfe9f7" stroke="#5d7cae" strokeWidth=".6" />
                    </svg>
                    <Caret />
                </NavButton>
            </NavBar>
        </NavBars>
    );
}

const playbackPaths = {
    'Go to start': 'M1 0v12M12 1L5 6l7 5z',
    'Step back': 'M9 1L2 6l7 5z',
    Play: 'M1 0l9 6-9 6z',
    'Step forward': 'M3 1l7 5-7 5z',
    'Go to end': 'M2 1l7 5-7 5zM12 0v12',
};

function History() {
    return (
        <Timeline>
            <Playback>
                {Object.entries(playbackPaths).map(([label, d]) => (
                    <button key={label} aria-label={label}>
                        <svg width="14" height="12" viewBox="0 0 14 12">
                            <path d={d} fill="#444" stroke="#444" />
                        </svg>
                    </button>
                ))}
            </Playback>
            {features.map((kind, i) => (
                <Feature key={i} aria-label={`${kind} ${i + 1}`} $current={i === features.length - 1}>
                    <svg width="18" height="16" viewBox="0 0 18 16">
                        {kind === 'sketch' ? (
                            <>
                                <path d="M1 1h14v14H1z" fill="#fff" stroke="#111" strokeWidth="1.500" />
                                <path d="M8 9l5-9h4l-6 8z" fill="#ffe81a" stroke="#b79a00" strokeWidth=".6" />
                            </>
                        ) : (
                            <>
                                <path d="M1.500 5L5 .800h6V10l-3 5H1.500z" fill="#bcd4ee" stroke="#26436e" />
                                <path d="M14 0l3 4h-2v8h-2V4h-2z" fill="#333" />
                            </>
                        )}
                    </svg>
                </Feature>
            ))}
            <Marker width="13" height="14" viewBox="0 0 13 14">
                <path d="M0 0h13v4L6.500 11 0 4z" fill="#5c5c5c" />
            </Marker>
        </Timeline>
    );
}

function App() {
    const valueRef = React.useRef(null);

    // the floating value is ready for typing as soon as the command starts
    React.useEffect(() => {
        valueRef.current.focus();
        valueRef.current.select();
    }, []);

    return (
        <Page>
            <GlobalStyle />
            <Gradients />
            <TitleBar>
                <svg width="16" height="16" viewBox="0 0 16 16">
                    <path d="M0 0h16v16H0z" fill="#cdebf6" />
                    <path d="M5 1h8l-1 3H8v2h4l-1 3H8v4l-3 1z" fill="#e8862c" />
                    <path d="M5 1l3 3v9l-3 1z" fill="#b9561a" />
                </svg>
                <h1>Autodesk Fusion 360</h1>
            </TitleBar>

            <QuickBar aria-label="Quick access">
                <QuickButton aria-label="Data panel">
                    <svg width="17" height="17" viewBox="0 0 17 17">
                        {[0, 6, 12].map((y) => [0, 6, 12].map((x) => (
                            <rect key={x + '-' + y} x={x} y={y} width="5" height="5" fill="#484848" />
                        )))}
                    </svg>
                </QuickButton>
                <QuickButton aria-label="File">
                    <svg width="17" height="17" viewBox="0 0 17 17">
                        <path d="M3 1h8v6h5v10H3z" fill="#484848" />
                        <path d="M12 1l4 5h-4z" fill="#484848" />
                    </svg>
                    <Caret size={7} />
                </QuickButton>
                <QuickButton aria-label="Save">
                    <svg width="16" height="16" viewBox="1 1 16 16">
                        <path d="M1 1h16v16H3l-2-2z" fill="#484848" />
                        <path d="M4 2h10v6H4zM5 11h8v5H5z" fill="#e0e0e0" />
                        <path d="M6 13h2v2H6z" fill="#484848" />
                    </svg>
                </QuickButton>
                <UndoRedo>
                    <QuickButton aria-label="Undo">
                        <svg width="17" height="14" viewBox="0 0 17 14">
                            <path d="M0 6l7-5v3c6 0 9 3 9 8-2-4-5-4-9-4v3z" fill="#484848" />
                        </svg>
                        <Caret size={7} />
                    </QuickButton>
                    <QuickButton aria-label="Redo" disabled>
                        <svg width="17" height="14" viewBox="0 0 17 14">
                            <path d="M17 6l-7-5v3c-6 0-9 3-9 8 2-4 5-4 9-4v3z" fill="#484848" />
                        </svg>
                        <Caret size={7} />
                    </QuickButton>
                </UndoRedo>
            </QuickBar>

            <TabBar>
                <Tab>
                    <button><DocCube faded /><span>Gear Tutorial v1</span></button>
                    <SyncDot />
                    <button aria-label="Close Gear Tutorial v1"><Cross /></button>
                </Tab>
                <Tab $active>
                    <button><DocCube /><span>Untitled*</span></button>
                    <button aria-label="Close Untitled"><Cross /></button>
                </Tab>
            </TabBar>

            <Banner>
                You are all set with the latest update. <a href="#new">Find out what's new.</a>
            </Banner>

            <Viewport>
                <Canvas />
                <Ribbon>
                    <ModelButton><span />MODEL <Caret color="#fff" /></ModelButton>
                    {groups.map(({ label, width, tools }, i) => (
                        <RibbonGroup key={label} $width={width} $last={i === groups.length - 1}>
                            <ToolRow>
                                {tools.map(([name, ToolIcon]) => (
                                    <ToolButton key={name} aria-label={name} $active={name === 'Extrude'}>
                                        <ToolIcon />
                                    </ToolButton>
                                ))}
                            </ToolRow>
                            <GroupLabel>{label} <Caret /></GroupLabel>
                        </RibbonGroup>
                    ))}
                </Ribbon>

                <SidePanelBar>
                    <svg width="10" height="8" viewBox="0 0 10 8">
                        <path d="M5 0v8L0 4zM10 0v8L5 4z" fill="#222" />
                    </svg>
                    <h2>BROWSER</h2>
                    <RoundSign />
                    <Grip />
                </SidePanelBar>
                <BrowserTree />

                <ExtrudeDialog />
                <Hint role="tooltip">Select sketch profiles or planar faces to extrude</Hint>
                <QuickValue>
                    <input ref={valueRef} defaultValue="0.00 mm" aria-label="Distance" />
                    <Caret />
                </QuickValue>

                <BottomRow>
                    <SidePanelBar $plain>
                        <h2>COMMENTS</h2>
                        <RoundSign plus />
                        <Grip />
                    </SidePanelBar>
                    <Navigation />
                </BottomRow>
            </Viewport>

            <History />
        </Page>
    );
}

export default App;
